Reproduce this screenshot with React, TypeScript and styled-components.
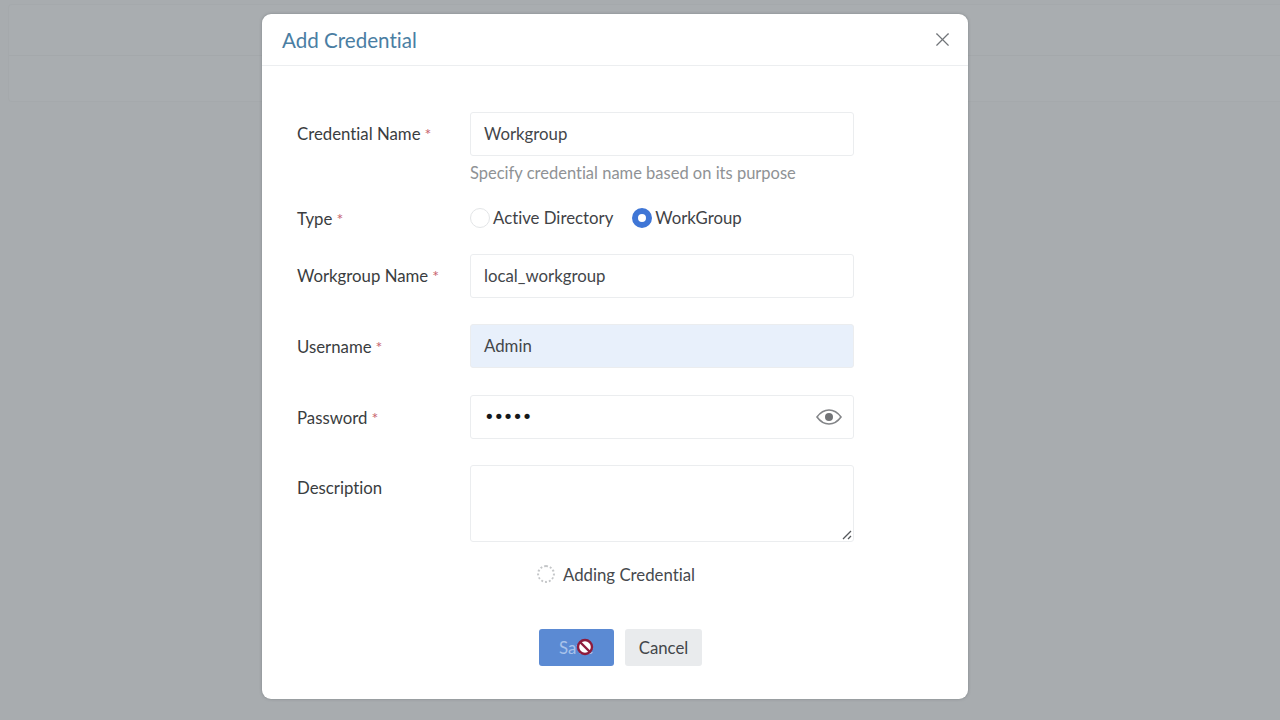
import React from "react";
import styled, { createGlobalStyle } from "styled-components";
import { X } from "lucide-react";

const GlobalStyle = createGlobalStyle`
  html, body {
    margin: 0;
    height: 100%;
    overflow: hidden;
    font-family: "Lato", "Liberation Sans", sans-serif;
    font-variant-ligatures: none;
  }
`;

const Page = styled.div`
  position: relative;
  width: 1280px;
  height: 720px;
  box-sizing: border-box;
  padding: 4px 0 0 8px;
  background: #a8acaf;
  overflow: hidden;
`;

const BackPanel = styled.div`
  height: 98px;
  box-sizing: border-box;
  border: 1px solid #a5a9ac;
  border-right: none;
  border-radius: 4px 0 0 4px;
  background: #a9adb0;
`;

const BackHeader = styled.div`
  height: 50px;
  border-bottom: 1px solid #a4a8ab;
`;

const Modal = styled.div`
  position: absolute;
  left: 262px;
  top: 14px;
  width: 706px;
  height: 685px;
  display: flex;
  flex-direction: column;
  background: #fff;
  border-radius: 9px;
  box-shadow: 0 0 3px rgba(90, 95, 100, 0.5);
`;

const ModalHeader = styled.header`
  height: 51px;
  flex: none;
  display: flex;
  align-items: center;
  justify-content: space-between;
  padding: 0 14px 0 20px;
  border-bottom: 1px solid #eceef0;
`;

const Title = styled.h2`
  margin: 0;
  font-size: 20.6px;
  font-weight: 400;
  color: #4a7ea3;
`;

const CloseIcon = styled(X)`
  color: #717579;
`;

const Form = styled.div`
  flex: 1;
  display: flex;
  flex-direction: column;
  padding: 46px 0 0 35px;
`;

const Row = styled.div<{ $height: number; $mb: number; $mt?: number; $top?: boolean }>`
  display: grid;
  grid-template-columns: 173px 384px;
  height: ${(p) => p.$height}px;
  margin-top: ${(p) => p.$mt ?? 0}px;
  margin-bottom: ${(p) => p.$mb}px;
  align-items: ${(p) => (p.$top ? "start" : "center")};
`;

const Label = styled.label<{ $top?: boolean; $low?: boolean }>`
  font-size: 16.8px;
  color: #3a3d40;
  ${(p) => (p.$top ? "margin-top: 12px;" : p.$low ? "padding-top: 1px;" : "padding-bottom: 1px;")}
`;

const Req = styled.span`
  color: #c8636c;
  margin-left: 4px;
  font-size: 16px;
`;

const Field = styled.div<{ $fill?: boolean }>`
  position: relative;
  height: 44px;
  box-sizing: border-box;
  display: flex;
  align-items: center;
  padding: 0 13px 1px;
  border: 1px solid #ebedef;
  border-radius: 3px;
  background: ${(p) => (p.$fill ? "#e8f0fb" : "#fff")};
  font-size: 16.8px;
  color: #43464a;
`;

const Dots = styled.span`
  font-size: 18px;
  letter-spacing: -1.2px;
  color: #16181a;
  font-family: "DejaVu Sans", sans-serif;
`;

const EyeButton = styled.svg`
  position: absolute;
  right: 10px;
  top: 9px;
`;

const Hint = styled.div`
  margin: 7px 0 0 173px;
  height: 21px;
  line-height: 21px;
  font-size: 16.5px;
  color: #8f9295;
`;

const RadioGroup = styled.div`
  display: flex;
  align-items: center;
  padding-bottom: 2px;
`;

const RadioDot = styled.span<{ $on?: boolean }>`
  width: 20px;
  height: 20px;
  box-sizing: border-box;
  border-radius: 50%;
  margin-right: 3px;
  background: #fff;
  border: ${(p) => (p.$on ? "6px solid #3f76d6" : "1px solid #e3e5e7")};
`;

const RadioText = styled.span`
  font-size: 16.8px;
  color: #3f4246;
  margin-right: 19px;
`;

const TextArea = styled(Field)`
  height: 77px;
`;

const Grip = styled.svg`
  position: absolute;
  right: 0;
  bottom: 0;
`;

const Status = styled.div`
  display: flex;
  align-items: center;
  margin: 21px 0 0 240px;
  height: 22px;
  font-size: 16.8px;
  color: #46494d;
`;

const Spinner = styled.span`
  width: 18px;
  height: 18px;
  box-sizing: border-box;
  border: 2px dotted #c4c6c8;
  border-radius: 50%;
  margin-right: 8px;
`;

const Actions = styled.div`
  display: flex;
  gap: 11px;
  margin: 44px 0 0 242px;
`;

const Button = styled.div<{ $primary?: boolean }>`
  position: relative;
  height: 37px;
  box-sizing: border-box;
  display: flex;
  align-items: center;
  border-radius: 3px;
  font-size: 16.8px;
  ${(p) =>
    p.$primary
      ? "width: 75px; padding-left: 20px; background: #5b8ad3; color: #a9c3ea;"
      : "width: 77px; justify-content: center; background: #e9ebed; color: #43464a;"}
`;

const NotAllowed = styled.svg`
  position: absolute;
  left: 37px;
  top: 9px;
`;

export default function App() {
  return (
    <>
      <GlobalStyle />
      <Page>
        <BackPanel>
          <BackHeader />
        </BackPanel>
        <Modal>
          <ModalHeader>
            <Title>Add Credential</Title>
            <CloseIcon size={23} strokeWidth={1.2} />
          </ModalHeader>
          <Form>
            <Row $height={44} $mb={0}>
              <Label>
                Credential Name<Req>*</Req>
              </Label>
              <Field>Workgroup</Field>
            </Row>
            <Hint>Specify credential name based on its purpose</Hint>
            <Row $height={22} $mt={23} $mb={25}>
              <Label>
                Type<Req>*</Req>
              </Label>
              <RadioGroup>
                <RadioDot />
                <RadioText>Active Directory</RadioText>
                <RadioDot $on />
                <RadioText>WorkGroup</RadioText>
              </RadioGroup>
            </Row>
            <Row $height={44} $mb={26}>
              <Label>
                Workgroup Name<Req>*</Req>
              </Label>
              <Field>local_workgroup</Field>
            </Row>
            <Row $height={44} $mb={27}>
              <Label $low>
                Username<Req>*</Req>
              </Label>
              <Field $fill>Admin</Field>
            </Row>
            <Row $height={44} $mb={26}>
              <Label $low>
                Password<Req>*</Req>
              </Label>
              <Field>
                <Dots>•••••</Dots>
                <EyeButton width="28" height="24" viewBox="0 0 28 24" fill="none">
                  <path
                    d="M2 12C6 6.500 10 5 14 5s8 1.500 12 7c-4 5.500-8 7-12 7S6 17.500 2 12Z"
                    stroke="#838588"
                    strokeWidth="1.6"
                  />
                  <circle cx="14" cy="12" r="4" fill="#727477" />
                </EyeButton>
              </Field>
            </Row>
            <Row $height={77} $mb={0} $top>
              <Label $top>Description</Label>
              <TextArea>
                <Grip width="12" height="12" viewBox="0 0 12 12" fill="none">
                  <path d="M2 10 10 2M7 10l3-3" stroke="#55585b" strokeWidth="1.3" />
                </Grip>
              </TextArea>
            </Row>
            <Status>
              <Spinner />
              Adding Credential
            </Status>
            <Actions>
              <Button $primary>
                Save
                <NotAllowed width="18" height="18" viewBox="0 0 18 18">
                  <circle cx="9" cy="9" r="7" fill="#fff" stroke="#8e1b3c" strokeWidth="2.400" />
                  <path d="M4.500 4.500 13.500 13.500" stroke="#8e1b3c" strokeWidth="2.400" />
                </NotAllowed>
              </Button>
              <Button>Cancel</Button>
            </Actions>
          </Form>
        </Modal>
      </Page>
    </>
  );
}
